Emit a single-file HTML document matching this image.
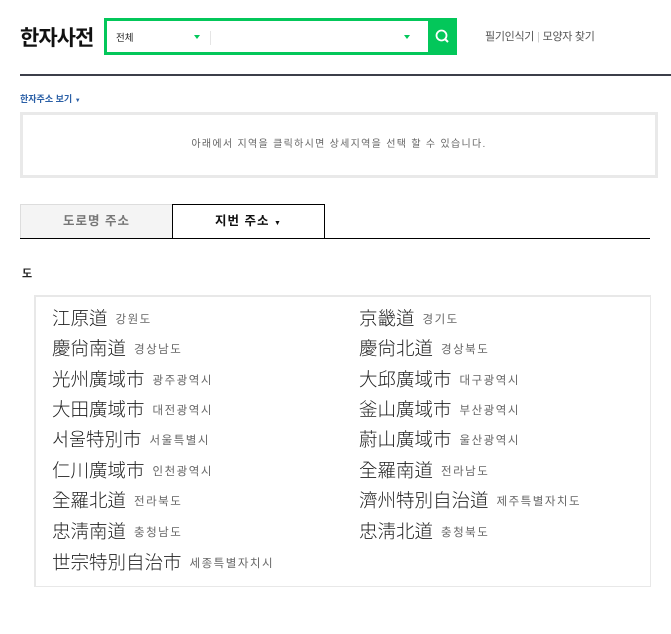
<!DOCTYPE html>
<html><head><meta charset="utf-8"><style>
*{margin:0;padding:0;box-sizing:border-box}
body{width:671px;height:634px;background:#fff;font-family:"Liberation Sans","Noto Sans CJK KR",sans-serif;position:relative;overflow:hidden;color:#222}
.abs{position:absolute}
.logo{left:20px;top:22px;font-size:21px;font-weight:bold;color:#111;letter-spacing:-1px}
.search{left:104px;top:18px;width:325px;height:37px;border:3px solid #03c75a;border-right:none}
.btn{left:428px;top:18px;width:29px;height:37px;background:#03c75a}
.tri{width:0;height:0;border-left:3.5px solid transparent;border-right:3.5px solid transparent;border-top:4px solid #03c75a}
.links{left:485px;top:28px;font-size:11px;color:#555;letter-spacing:-.3px}
.links span{color:#ccc;margin:0 3px}
.rule{left:20px;top:74px;width:651px;height:2px;background:#3c3f4a}
.hj{left:20px;top:92px;font-size:9px;font-weight:bold;color:#2a5fa6}
.gbox{left:20px;top:112px;width:638px;height:66px;border:3px solid #e9e9e9;font-size:10px;color:#666;text-align:center;line-height:60px;letter-spacing:1.3px}
.tab1{left:20px;top:204px;width:153px;height:35px;background:#f4f4f4;border:1px solid #ddd;border-bottom:none;font-size:12.5px;color:#777;text-align:center;line-height:33px;font-weight:bold;letter-spacing:1px}
.tab2{left:172px;top:204px;width:153px;height:35px;background:#fff;border:1px solid #000;border-bottom:none;font-size:12.5px;color:#111;text-align:center;line-height:33px;font-weight:bold;letter-spacing:1px}
.line{left:20px;top:238px;width:630px;height:1px;background:#000}
.do{left:22px;top:265px;font-size:11px;font-weight:bold}
.box{left:34px;top:295px;width:617px;height:292px;border:2px solid #e8e8e8;border-right-width:1px;border-bottom-width:1px}
.it{position:absolute;font-size:18.5px;font-weight:300;color:#222;white-space:nowrap;line-height:22px}
.it small{font-size:11.5px;font-weight:400;color:#666;margin-left:8px;letter-spacing:1.5px;vertical-align:2px}
</style></head><body>
<div class="abs logo">한자사전</div>
<div class="abs search">
 <div class="abs" style="left:9px;top:9px;font-size:9.5px;color:#222">전체</div>
 <div class="abs tri" style="left:87px;top:14px"></div>
 <div class="abs" style="left:103px;top:10px;width:1px;height:14px;background:#e5e5e5"></div>
 <div class="abs tri" style="left:297px;top:14px"></div>
</div>
<div class="abs btn"><svg width="29" height="37" viewBox="0 0 29 37"><circle cx="13.5" cy="17.5" r="5" fill="none" stroke="#fff" stroke-width="1.8"/><line x1="17" y1="21" x2="20" y2="24" stroke="#fff" stroke-width="2"/></svg></div>
<div class="abs links">필기인식기<span>|</span>모양자 찾기</div>
<div class="abs rule"></div>
<div class="abs hj">한자주소 보기 <span style="font-size:6px">▼</span></div>
<div class="abs gbox">아래에서 지역을 클릭하시면 상세지역을 선택 할 수 있습니다.</div>
<div class="abs tab1">도로명 주소</div>
<div class="abs tab2">지번 주소 <span style="font-size:7px">▼</span></div>
<div class="abs line"></div>
<div class="abs do">도</div>
<div class="abs box"></div>
<div class="it" style="left:52px;top:308px">江原道<small>강원도</small></div>
<div class="it" style="left:359px;top:308px">京畿道<small>경기도</small></div>
<div class="it" style="left:52px;top:338px">慶尙南道<small>경상남도</small></div>
<div class="it" style="left:359px;top:338px">慶尙北道<small>경상북도</small></div>
<div class="it" style="left:52px;top:369px">光州廣域市<small>광주광역시</small></div>
<div class="it" style="left:359px;top:369px">大邱廣域市<small>대구광역시</small></div>
<div class="it" style="left:52px;top:399px">大田廣域市<small>대전광역시</small></div>
<div class="it" style="left:359px;top:399px">釜山廣域市<small>부산광역시</small></div>
<div class="it" style="left:52px;top:429px">서울特別市<small>서울특별시</small></div>
<div class="it" style="left:359px;top:429px">蔚山廣域市<small>울산광역시</small></div>
<div class="it" style="left:52px;top:460px">仁川廣域市<small>인천광역시</small></div>
<div class="it" style="left:359px;top:460px">全羅南道<small>전라남도</small></div>
<div class="it" style="left:52px;top:490px">全羅北道<small>전라북도</small></div>
<div class="it" style="left:359px;top:490px">濟州特別自治道<small>제주특별자치도</small></div>
<div class="it" style="left:52px;top:521px">忠淸南道<small>충청남도</small></div>
<div class="it" style="left:359px;top:521px">忠淸北道<small>충청북도</small></div>
<div class="it" style="left:52px;top:552px">世宗特別自治市<small>세종특별자치시</small></div>
</body></html>
